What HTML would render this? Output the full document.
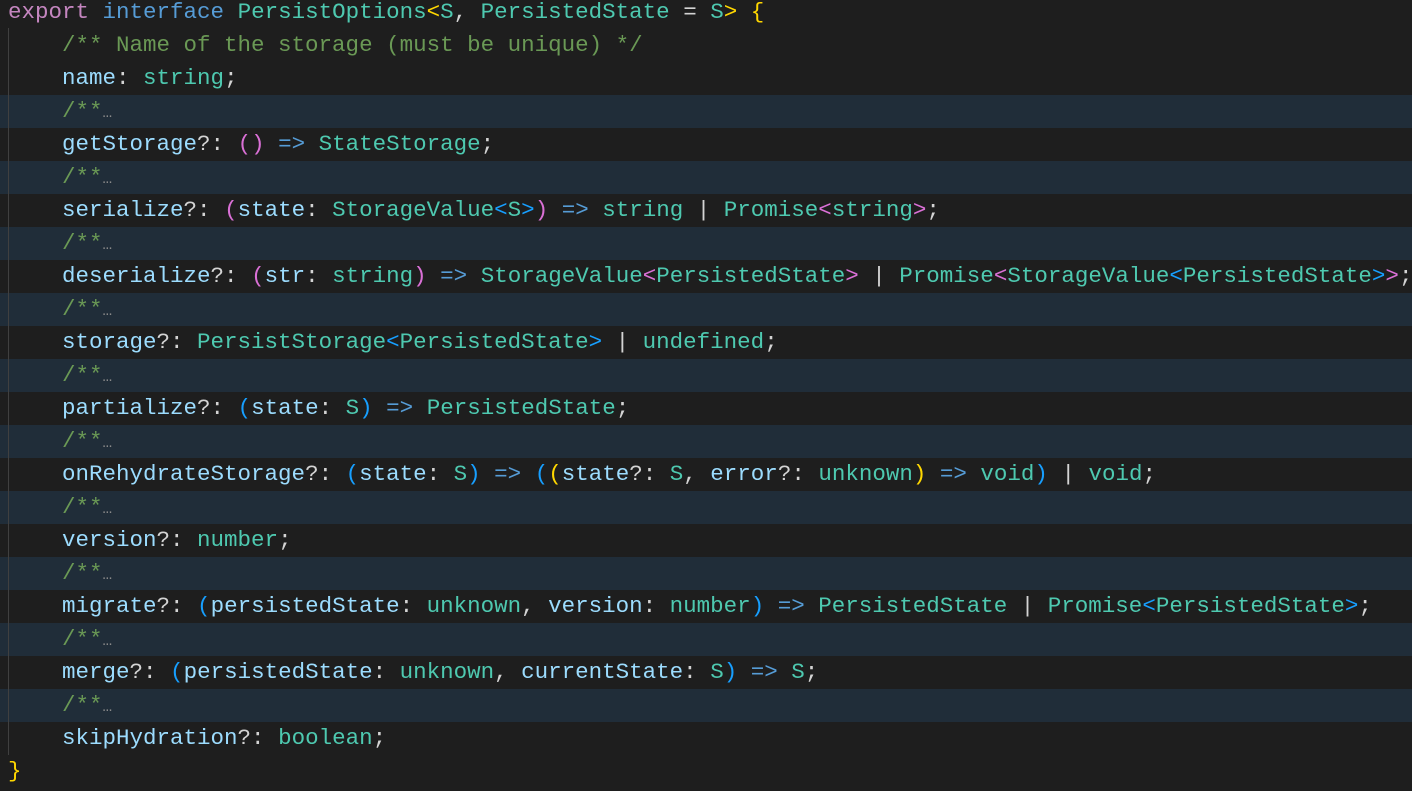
<!DOCTYPE html>
<html><head><meta charset="utf-8"><style>
html,body{margin:0;padding:0;background:#1e1e1e;width:1412px;height:791px;overflow:hidden}
#c{position:absolute;left:0;top:-4.5px;width:1412px;font-family:"Liberation Mono",monospace;font-size:22.5px;color:#d4d4d4}
.l{height:33px;line-height:33px;padding-left:8px;white-space:pre}
.f{background:#202d39}
.k{color:#c586c0}.s{color:#569cd6}.t{color:#4ec9b0}.p{color:#9cdcfe}.c{color:#6a9955}
.g{color:#ffd700}.m{color:#da70d6}.b{color:#179fff}.e{color:#8a8a8a;font-size:16px}
#guide{position:absolute;left:8px;top:28px;width:1px;height:727px;background:#404040}
</style></head><body>
<div id="c"><div class="l"><span class="k">export</span> <span class="s">interface</span> <span class="t">PersistOptions</span><span class="g">&lt;</span><span class="t">S</span>, <span class="t">PersistedState</span> = <span class="t">S</span><span class="g">&gt;</span> <span class="g">{</span></div><div class="l">    <span class="c">/** Name of the storage (must be unique) */</span></div><div class="l">    <span class="p">name</span>: <span class="t">string</span>;</div><div class="l f">    <span class="c">/**</span><span class="e">…</span></div><div class="l">    <span class="p">getStorage</span>?: <span class="m">()</span> <span class="s">=&gt;</span> <span class="t">StateStorage</span>;</div><div class="l f">    <span class="c">/**</span><span class="e">…</span></div><div class="l">    <span class="p">serialize</span>?: <span class="m">(</span><span class="p">state</span>: <span class="t">StorageValue</span><span class="b">&lt;</span><span class="t">S</span><span class="b">&gt;</span><span class="m">)</span> <span class="s">=&gt;</span> <span class="t">string</span> | <span class="t">Promise</span><span class="m">&lt;</span><span class="t">string</span><span class="m">&gt;</span>;</div><div class="l f">    <span class="c">/**</span><span class="e">…</span></div><div class="l">    <span class="p">deserialize</span>?: <span class="m">(</span><span class="p">str</span>: <span class="t">string</span><span class="m">)</span> <span class="s">=&gt;</span> <span class="t">StorageValue</span><span class="m">&lt;</span><span class="t">PersistedState</span><span class="m">&gt;</span> | <span class="t">Promise</span><span class="m">&lt;</span><span class="t">StorageValue</span><span class="b">&lt;</span><span class="t">PersistedState</span><span class="b">&gt;</span><span class="m">&gt;</span>;</div><div class="l f">    <span class="c">/**</span><span class="e">…</span></div><div class="l">    <span class="p">storage</span>?: <span class="t">PersistStorage</span><span class="b">&lt;</span><span class="t">PersistedState</span><span class="b">&gt;</span> | <span class="t">undefined</span>;</div><div class="l f">    <span class="c">/**</span><span class="e">…</span></div><div class="l">    <span class="p">partialize</span>?: <span class="b">(</span><span class="p">state</span>: <span class="t">S</span><span class="b">)</span> <span class="s">=&gt;</span> <span class="t">PersistedState</span>;</div><div class="l f">    <span class="c">/**</span><span class="e">…</span></div><div class="l">    <span class="p">onRehydrateStorage</span>?: <span class="b">(</span><span class="p">state</span>: <span class="t">S</span><span class="b">)</span> <span class="s">=&gt;</span> <span class="b">(</span><span class="g">(</span><span class="p">state</span>?: <span class="t">S</span>, <span class="p">error</span>?: <span class="t">unknown</span><span class="g">)</span> <span class="s">=&gt;</span> <span class="t">void</span><span class="b">)</span> | <span class="t">void</span>;</div><div class="l f">    <span class="c">/**</span><span class="e">…</span></div><div class="l">    <span class="p">version</span>?: <span class="t">number</span>;</div><div class="l f">    <span class="c">/**</span><span class="e">…</span></div><div class="l">    <span class="p">migrate</span>?: <span class="b">(</span><span class="p">persistedState</span>: <span class="t">unknown</span>, <span class="p">version</span>: <span class="t">number</span><span class="b">)</span> <span class="s">=&gt;</span> <span class="t">PersistedState</span> | <span class="t">Promise</span><span class="b">&lt;</span><span class="t">PersistedState</span><span class="b">&gt;</span>;</div><div class="l f">    <span class="c">/**</span><span class="e">…</span></div><div class="l">    <span class="p">merge</span>?: <span class="b">(</span><span class="p">persistedState</span>: <span class="t">unknown</span>, <span class="p">currentState</span>: <span class="t">S</span><span class="b">)</span> <span class="s">=&gt;</span> <span class="t">S</span>;</div><div class="l f">    <span class="c">/**</span><span class="e">…</span></div><div class="l">    <span class="p">skipHydration</span>?: <span class="t">boolean</span>;</div><div class="l"><span class="g">}</span></div></div>
<div id="guide"></div>
</body></html>
